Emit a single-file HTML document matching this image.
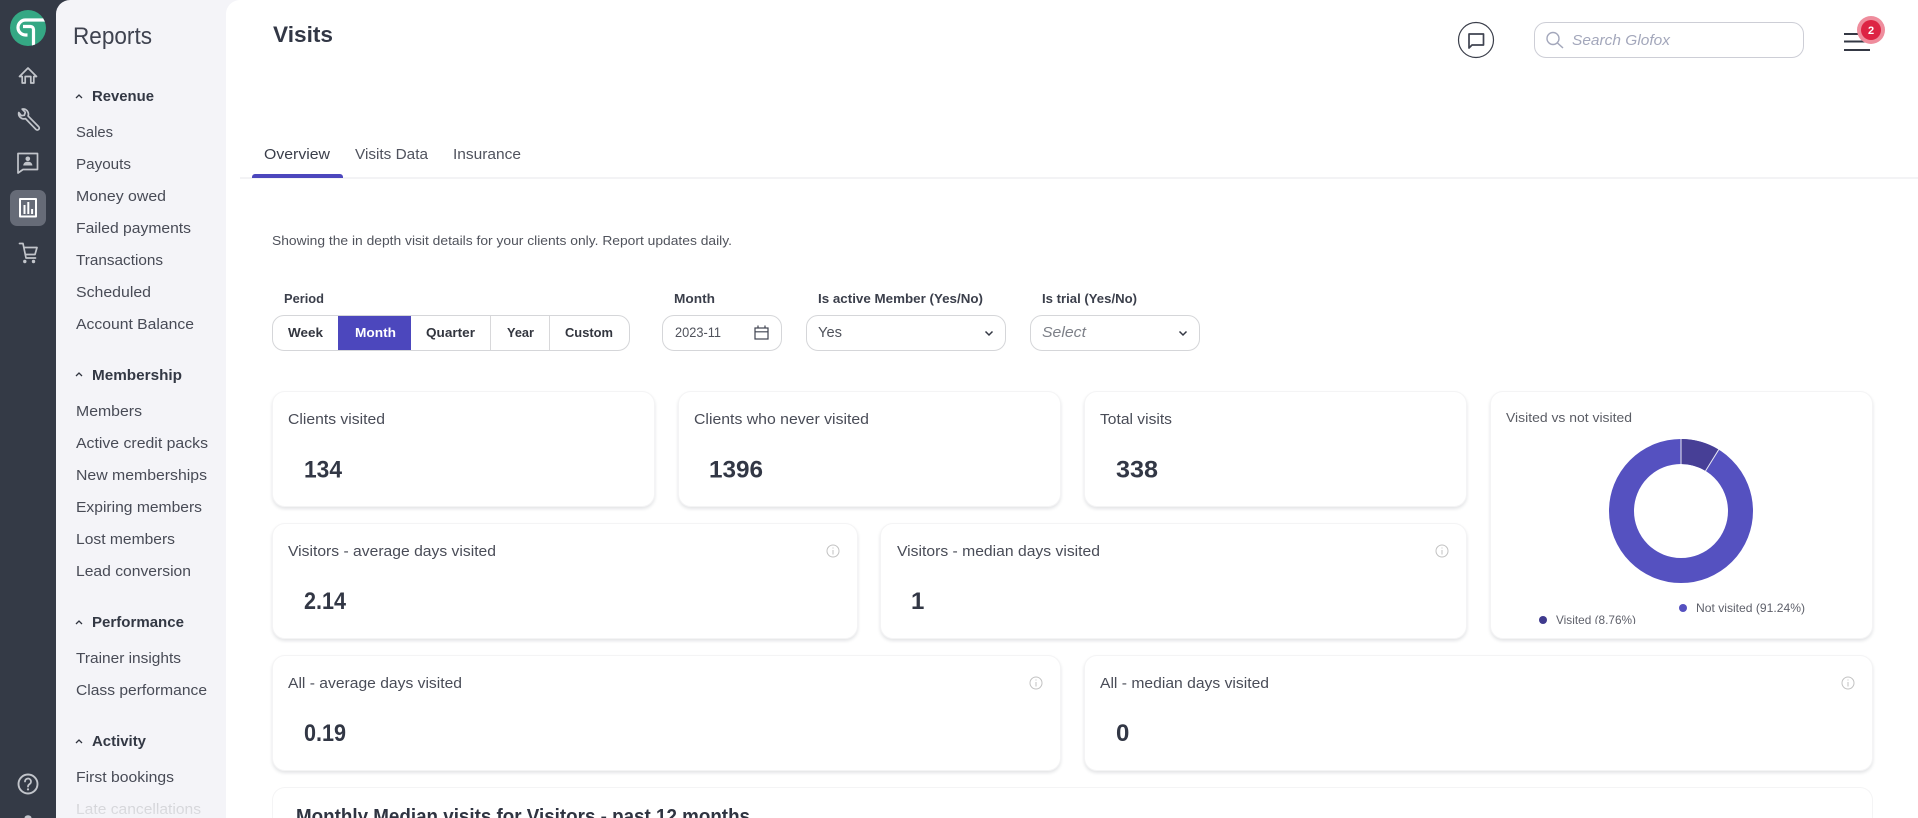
<!DOCTYPE html>
<html lang="en">
<head>
<meta charset="utf-8">
<title>Visits</title>
<style>
html,body{margin:0;padding:0;width:1918px;height:818px;overflow:hidden;background:#fff;font-family:"Liberation Sans",sans-serif}
#page{position:relative;width:1918px;height:818px;overflow:hidden;background:#fff}
.abs{position:absolute;box-sizing:border-box}
#rail{left:0;top:0;width:70px;height:818px;background:#343a46}
#panel{left:56px;top:0;width:190px;height:818px;background:#f4f4f8;border-radius:14px 0 0 0}
#main{left:226px;top:0;width:1692px;height:818px;background:#fff;border-radius:14px 0 0 0}
.card{position:absolute;box-sizing:border-box;background:#fff;border:1px solid #f4f4f5;border-radius:13px;box-shadow:0 2px 3px rgba(40,44,60,.13)}
.ctl{position:absolute;box-sizing:border-box;background:#fff;border:1px solid #d5d6d9;border-radius:12px}
svg{position:absolute;left:0;top:0;overflow:hidden}
text{font-family:"Liberation Sans",sans-serif;fill:#3a3e4a}
.nav{font-size:14.5px;fill:#484b56}
.hd{font-size:15px;font-weight:700;fill:#333844}
.tab{font-size:14.5px;fill:#50535e}
.lbl{font-size:13px;font-weight:700;fill:#3b3f4b}
.btn{font-size:13px;font-weight:700;fill:#33363f}
.ct{font-size:14.5px;fill:#494c57}
.val{font-size:24px;font-weight:700;fill:#323745}
.leg{font-size:12px;fill:#5f616b}
</style>
</head>
<body>
<div id="page">
<div class="abs" id="rail"></div>
<div class="abs" id="panel"></div>
<div class="abs" id="main"></div>
<div class="abs" style="left:10px;top:190px;width:36px;height:36px;border-radius:7px;background:#666b77"></div>

<div class="abs" style="left:240px;top:177px;width:1678px;height:2px;background:#f3f3f5"></div>
<div class="abs" style="left:252px;top:174px;width:91px;height:4px;background:#4c47bd;border-radius:3px 3px 0 0"></div>

<div class="ctl" style="left:1534px;top:22px;width:270px;height:36px;border-color:#cdced6"></div>

<div class="ctl" style="left:272px;top:315px;width:358px;height:36px;overflow:hidden">
  <div class="abs" style="left:65px;top:-1px;width:73px;height:36px;background:#4c47bd"></div>
  <div class="abs" style="left:217px;top:0;width:1px;height:34px;background:#d8d8da"></div>
  <div class="abs" style="left:276px;top:0;width:1px;height:34px;background:#d8d8da"></div>
</div>
<div class="ctl" style="left:662px;top:315px;width:120px;height:36px"></div>
<div class="ctl" style="left:806px;top:315px;width:200px;height:36px"></div>
<div class="ctl" style="left:1030px;top:315px;width:170px;height:36px"></div>

<div class="card" style="left:272px;top:391px;width:383px;height:116px"></div>
<div class="card" style="left:678px;top:391px;width:383px;height:116px"></div>
<div class="card" style="left:1084px;top:391px;width:383px;height:116px"></div>
<div class="card" style="left:1490px;top:391px;width:383px;height:248px"></div>
<div class="card" style="left:272px;top:523px;width:586px;height:116px"></div>
<div class="card" style="left:880px;top:523px;width:587px;height:116px"></div>
<div class="card" style="left:272px;top:655px;width:789px;height:116px"></div>
<div class="card" style="left:1084px;top:655px;width:789px;height:116px"></div>
<div class="card" style="left:272px;top:787px;width:1601px;height:31px;border-bottom:0;border-radius:13px 13px 0 0;box-shadow:none"></div>

<svg width="1918" height="818" viewBox="0 0 1918 818" xmlns="http://www.w3.org/2000/svg">
  <defs>
    <clipPath id="legclip"><rect x="1500" y="600" width="360" height="24"/></clipPath>
    <clipPath id="logoclip"><circle cx="28" cy="28" r="18"/></clipPath>
    <linearGradient id="fadeg" x1="0" y1="0" x2="0" y2="1"><stop offset="0" stop-color="#f4f4f8" stop-opacity="0"/><stop offset="1" stop-color="#f4f4f8" stop-opacity=".55"/></linearGradient>
  </defs>

  <!-- rail icons -->
  <circle cx="28" cy="28" r="18" fill="#35a884"/>
  <g clip-path="url(#logoclip)" fill="none" stroke="#fff" stroke-width="3.200">
    <path d="M47 20H25.500A7.500 7.500 0 0 0 25.500 35H27.500"/>
    <path d="M23 26.500H30.500A3 3 0 0 1 33.500 29.500V47"/>
  </g>
  <g fill="none" stroke="#c2c5cb" stroke-width="1.700" stroke-linejoin="round" stroke-linecap="round">
    <path d="M19.500 76.500L28 68L36.500 76.500H33.800V83H30.800V76.500H25.200V83H22.200V76.500Z"/>
    <path d="M18.800 112.500A5.200 5.200 0 0 0 25.500 118.600L36 129.500A1.900 1.900 0 0 0 38.600 126.600L28.100 116A5.200 5.200 0 0 0 22.200 109.100L25.300 112.300L24.300 115.300L21.300 115.700Z"/>
    <path d="M18 153.500H37.500V169.500H23L18 173Z"/>
    <rect x="20" y="199" width="16" height="17.500" stroke="#fff" stroke-width="2"/>
    <path d="M19.500 243.500H23L26 258H35.500M24 247.500H37L35 254.500H25.500"/>
    <circle cx="28" cy="784" r="9.500" stroke-width="1.900"/>
    <path d="M25 781.500A3 3 0 1 1 29.400 784.200C28.300 784.900 28 785.500 28 786.600" stroke-width="1.800"/>
  </g>
  <g fill="#c2c5cb">
    <circle cx="27.800" cy="158.800" r="2.300"/>
    <path d="M23.200 165.500C23.500 162.700 25.500 161.800 27.800 161.800C30.100 161.800 32.100 162.700 32.400 165.500Z"/>
    <circle cx="24.800" cy="261.500" r="1.700"/>
    <circle cx="33.500" cy="261.500" r="1.700"/>
    <circle cx="28" cy="789.400" r="1.100"/>
    <path d="M24.500 818A3.500 2.800 0 0 1 31.500 818Z"/>
  </g>
  <g fill="#fff"><rect x="23.500" y="205" width="2" height="9"/><rect x="27.300" y="202" width="2" height="12"/><rect x="31.100" y="209" width="2" height="5"/></g>

  <!-- sidebar text -->
  <text x="73" y="44" font-size="24" textLength="79" lengthAdjust="spacingAndGlyphs" style="fill:#3f4350">Reports</text>
  <g fill="none" stroke="#30343f" stroke-width="1.300">
    <path d="M76 98L79 95L82 98"/><path d="M76 376L79 373L82 376"/><path d="M76 624L79 621L82 624"/><path d="M76 743L79 740L82 743"/>
  </g>
  <text class="hd" x="92" y="101" textLength="62" lengthAdjust="spacingAndGlyphs">Revenue</text>
  <text class="nav" x="76" y="137" textLength="37" lengthAdjust="spacingAndGlyphs">Sales</text>
  <text class="nav" x="76" y="169" textLength="55" lengthAdjust="spacingAndGlyphs">Payouts</text>
  <text class="nav" x="76" y="201" textLength="90" lengthAdjust="spacingAndGlyphs">Money owed</text>
  <text class="nav" x="76" y="233" textLength="115" lengthAdjust="spacingAndGlyphs">Failed payments</text>
  <text class="nav" x="76" y="265" textLength="87" lengthAdjust="spacingAndGlyphs">Transactions</text>
  <text class="nav" x="76" y="297" textLength="75" lengthAdjust="spacingAndGlyphs">Scheduled</text>
  <text class="nav" x="76" y="329" textLength="118" lengthAdjust="spacingAndGlyphs">Account Balance</text>
  <text class="hd" x="92" y="380" textLength="90" lengthAdjust="spacingAndGlyphs">Membership</text>
  <text class="nav" x="76" y="416" textLength="66" lengthAdjust="spacingAndGlyphs">Members</text>
  <text class="nav" x="76" y="448" textLength="132" lengthAdjust="spacingAndGlyphs">Active credit packs</text>
  <text class="nav" x="76" y="480" textLength="131" lengthAdjust="spacingAndGlyphs">New memberships</text>
  <text class="nav" x="76" y="512" textLength="126" lengthAdjust="spacingAndGlyphs">Expiring members</text>
  <text class="nav" x="76" y="544" textLength="99" lengthAdjust="spacingAndGlyphs">Lost members</text>
  <text class="nav" x="76" y="576" textLength="115" lengthAdjust="spacingAndGlyphs">Lead conversion</text>
  <text class="hd" x="92" y="627" textLength="92" lengthAdjust="spacingAndGlyphs">Performance</text>
  <text class="nav" x="76" y="663" textLength="105" lengthAdjust="spacingAndGlyphs">Trainer insights</text>
  <text class="nav" x="76" y="695" textLength="131" lengthAdjust="spacingAndGlyphs">Class performance</text>
  <text class="hd" x="92" y="746" textLength="54" lengthAdjust="spacingAndGlyphs">Activity</text>
  <text class="nav" x="76" y="782" textLength="98" lengthAdjust="spacingAndGlyphs">First bookings</text>
  <text class="nav" x="76" y="814" textLength="125" lengthAdjust="spacingAndGlyphs" style="fill:#c4c5c9">Late cancellations</text>
  <rect x="56" y="785" width="170" height="33" fill="url(#fadeg)"/>

  <!-- header -->
  <text x="273" y="42" font-size="22" font-weight="700" textLength="60" lengthAdjust="spacingAndGlyphs" style="fill:#323745">Visits</text>
  <circle cx="1476" cy="40" r="17.500" fill="none" stroke="#3a3e4a" stroke-width="1.200"/>
  <path d="M1469 34H1483.500V45H1472L1469 48Z" fill="none" stroke="#3f4350" stroke-width="1.700" stroke-linejoin="round"/>
  <circle cx="1553" cy="38.500" r="6" fill="none" stroke="#a3a7bb" stroke-width="1.400"/>
  <path d="M1557.500 43L1563 48" stroke="#a3a7bb" stroke-width="1.500" fill="none"/>
  <text x="1572" y="45" font-size="14.500" font-style="italic" textLength="98" lengthAdjust="spacingAndGlyphs" style="fill:#a3a7bb">Search Glofox</text>
  <g stroke="#343844" stroke-width="2"><path d="M1844 34H1870M1844 41.500H1870M1844 50H1870"/></g>
  <circle cx="1871" cy="30" r="14" fill="#ef8d9d"/>
  <circle cx="1871" cy="30" r="10" fill="#dd2444"/>
  <text x="1871" y="34" font-size="11" font-weight="700" text-anchor="middle" style="fill:#fff">2</text>

  <!-- tabs -->
  <text class="tab" x="264" y="159" textLength="66" lengthAdjust="spacingAndGlyphs" style="fill:#3a3e4a">Overview</text>
  <text class="tab" x="355" y="159" textLength="73" lengthAdjust="spacingAndGlyphs">Visits Data</text>
  <text class="tab" x="453" y="159" textLength="68" lengthAdjust="spacingAndGlyphs">Insurance</text>
  <text x="272" y="245" font-size="13" textLength="460" lengthAdjust="spacingAndGlyphs" style="fill:#50535c">Showing the in depth visit details for your clients only. Report updates daily.</text>

  <!-- filters -->
  <text class="lbl" x="284" y="303" textLength="40" lengthAdjust="spacingAndGlyphs">Period</text>
  <text class="lbl" x="674" y="303" textLength="41" lengthAdjust="spacingAndGlyphs">Month</text>
  <text class="lbl" x="818" y="303" textLength="165" lengthAdjust="spacingAndGlyphs">Is active Member (Yes/No)</text>
  <text class="lbl" x="1042" y="303" textLength="95" lengthAdjust="spacingAndGlyphs">Is trial (Yes/No)</text>
  <text class="btn" x="288" y="337" textLength="35" lengthAdjust="spacingAndGlyphs">Week</text>
  <text class="btn" x="355" y="337" textLength="41" lengthAdjust="spacingAndGlyphs" style="fill:#fff">Month</text>
  <text class="btn" x="426" y="337" textLength="49" lengthAdjust="spacingAndGlyphs">Quarter</text>
  <text class="btn" x="507" y="337" textLength="27" lengthAdjust="spacingAndGlyphs">Year</text>
  <text class="btn" x="565" y="337" textLength="48" lengthAdjust="spacingAndGlyphs">Custom</text>
  <text x="675" y="337" font-size="14" textLength="46" lengthAdjust="spacingAndGlyphs" style="fill:#50535c">2023-11</text>
  <g fill="none" stroke="#3f4350" stroke-width="1.200">
    <rect x="755" y="328" width="13" height="11"/>
    <path d="M755 331.800H768M758 325.500V328M765 325.500V328"/>
  </g>
  <text x="818" y="337" font-size="15" textLength="24" lengthAdjust="spacingAndGlyphs" style="fill:#50535c">Yes</text>
  <path d="M985.500 331.500L989 335L992.500 331.500" fill="none" stroke="#343844" stroke-width="1.500"/>
  <text x="1042" y="337" font-size="15" font-style="italic" textLength="44" lengthAdjust="spacingAndGlyphs" style="fill:#7d8088">Select</text>
  <path d="M1179.500 331.500L1183 335L1186.500 331.500" fill="none" stroke="#343844" stroke-width="1.500"/>

  <!-- card text -->
  <text class="ct" x="288" y="424" textLength="97" lengthAdjust="spacingAndGlyphs">Clients visited</text>
  <text class="ct" x="694" y="424" textLength="175" lengthAdjust="spacingAndGlyphs">Clients who never visited</text>
  <text class="ct" x="1100" y="424" textLength="72" lengthAdjust="spacingAndGlyphs">Total visits</text>
  <text class="val" x="304" y="477.500" textLength="38" lengthAdjust="spacingAndGlyphs">134</text>
  <text class="val" x="709" y="477.500" textLength="54" lengthAdjust="spacingAndGlyphs">1396</text>
  <text class="val" x="1116" y="477.500" textLength="42" lengthAdjust="spacingAndGlyphs">338</text>
  <text class="ct" x="288" y="556" textLength="208" lengthAdjust="spacingAndGlyphs">Visitors - average days visited</text>
  <text class="ct" x="897" y="556" textLength="203" lengthAdjust="spacingAndGlyphs">Visitors - median days visited</text>
  <text class="val" x="304" y="609" textLength="42" lengthAdjust="spacingAndGlyphs">2.14</text>
  <text class="val" x="911" y="609">1</text>
  <text class="ct" x="288" y="688" textLength="174" lengthAdjust="spacingAndGlyphs">All - average days visited</text>
  <text class="ct" x="1100" y="688" textLength="169" lengthAdjust="spacingAndGlyphs">All - median days visited</text>
  <text class="val" x="304" y="741" textLength="42" lengthAdjust="spacingAndGlyphs">0.19</text>
  <text class="val" x="1116" y="741">0</text>

  <!-- info icons -->
  <g fill="none" stroke="#c2c2c2" stroke-width="1">
    <circle cx="833" cy="551" r="6"/><circle cx="1442" cy="551" r="6"/><circle cx="1036" cy="683" r="6"/><circle cx="1848" cy="683" r="6"/>
    <path d="M833 550V554.500M1442 550V554.500M1036 682V686.500M1848 682V686.500"/>
    <path d="M833 547.500V548.500M1442 547.500V548.500M1036 679.500V680.500M1848 679.500V680.500"/>
  </g>

  <!-- donut -->
  <text x="1506" y="422" font-size="13" textLength="126" lengthAdjust="spacingAndGlyphs" style="fill:#5a5c64">Visited vs not visited</text>
  <circle cx="1681" cy="511" r="59.500" fill="none" stroke="#5551c0" stroke-width="25"/>
  <path d="M1681 439A72 72 0 0 1 1718.500 449.500L1705.500 470.900A47 47 0 0 0 1681 464Z" fill="#473f96"/>
  <path d="M1681 439V464M1719 449.200L1705.500 471" stroke="#e9e9f3" stroke-width="1" fill="none"/>
  <circle cx="1683" cy="608" r="4" fill="#5551c0"/>
  <text class="leg" x="1696" y="612" textLength="109" lengthAdjust="spacingAndGlyphs">Not visited (91.24%)</text>
  <circle cx="1543" cy="620" r="4" fill="#3f3a8e"/>
  <g clip-path="url(#legclip)"><text class="leg" x="1556" y="624" textLength="80" lengthAdjust="spacingAndGlyphs">Visited (8.76%)</text></g>
</svg>

<div class="abs" style="left:296px;top:800px;width:470px;height:18px;overflow:hidden">
  <svg width="470" height="18" viewBox="296 800 470 18" xmlns="http://www.w3.org/2000/svg">
    <text x="296" y="823" font-size="20" font-weight="700" textLength="454" lengthAdjust="spacingAndGlyphs" style="fill:#2f3441">Monthly Median visits for Visitors - past 12 months</text>
  </svg>
</div>
</div>
</body>
</html>
